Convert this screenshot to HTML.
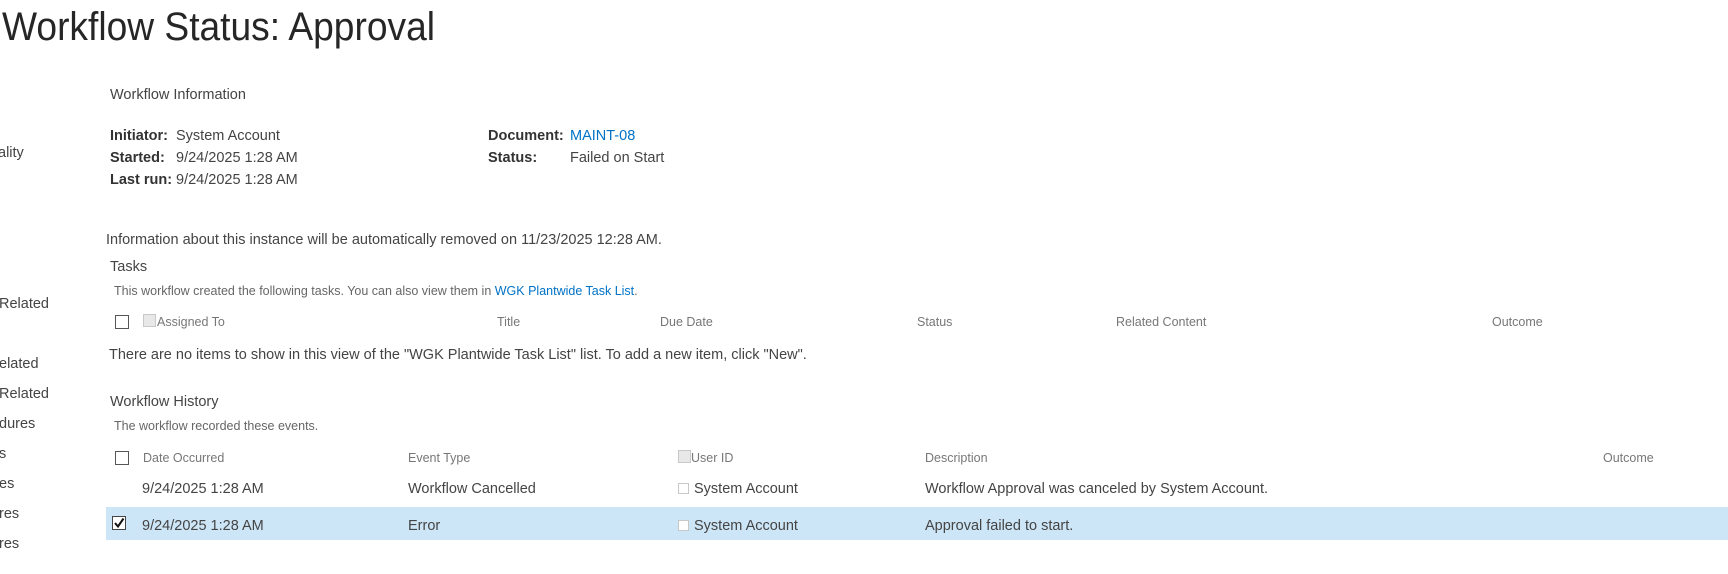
<!DOCTYPE html>
<html><head><meta charset="utf-8"><style>
body{margin:0;width:1728px;height:574px;background:#fff;overflow:hidden;position:relative;font-family:"Liberation Sans",sans-serif;color:#444;}
.a{position:absolute;white-space:nowrap;line-height:1;}
.t{font-size:14.5px;color:#444;margin-top:2px;}
.h{font-size:12.5px;color:#777;}
.s{font-size:12.5px;color:#666;}
.b{font-weight:bold;color:#333;}
.lk{color:#0072c6;}
.cb{position:absolute;width:12px;height:12px;border:1px solid #555;background:#fff;}
.ic{position:absolute;width:11px;height:11px;border:1px solid #c8c8c8;background:#e8e8e8;}
.sb{position:absolute;width:9px;height:9px;border:1px solid #c8c8c8;background:#fff;}
</style></head><body>
<svg style="position:absolute;left:0;top:0" width="480" height="60"><text x="2" y="40" font-family="Liberation Sans, sans-serif" font-size="40" fill="#262626" textLength="433" lengthAdjust="spacingAndGlyphs">Workflow Status: Approval</text></svg>

<div class="a t" style="left:-2px;top:144px">ality</div>
<div class="a t" style="left:-1px;top:295px">Related</div>
<div class="a t" style="left:-1px;top:355px">elated</div>
<div class="a t" style="left:-1px;top:385px">Related</div>
<div class="a t" style="left:-1px;top:415px">dures</div>
<div class="a t" style="left:-1px;top:445px">s</div>
<div class="a t" style="left:-1px;top:475px">es</div>
<div class="a t" style="left:-1px;top:505px">res</div>
<div class="a t" style="left:-1px;top:535px">res</div>

<div class="a t" style="left:110px;top:86px">Workflow Information</div>
<div class="a t b" style="left:110px;top:127px">Initiator:</div><div class="a t" style="left:176px;top:127px">System Account</div>
<div class="a t b" style="left:110px;top:149px">Started:</div><div class="a t" style="left:176px;top:149px">9/24/2025 1:28 AM</div>
<div class="a t b" style="left:110px;top:171px">Last run:</div><div class="a t" style="left:176px;top:171px">9/24/2025 1:28 AM</div>
<div class="a t b" style="left:488px;top:127px">Document:</div><div class="a t lk" style="left:570px;top:127px">MAINT-08</div>
<div class="a t b" style="left:488px;top:149px">Status:</div><div class="a t" style="left:570px;top:149px">Failed on Start</div>

<div class="a t" style="left:106px;top:231px">Information about this instance will be automatically removed on 11/23/2025 12:28 AM.</div>
<div class="a t" style="left:110px;top:258px">Tasks</div>
<div class="a s" style="left:114px;top:285px">This workflow created the following tasks. You can also view them in <span class="lk">WGK Plantwide Task List</span>.</div>
<div class="cb" style="left:115px;top:315px"></div>
<div class="ic" style="left:143px;top:314px"></div>
<div class="a h" style="left:157px;top:316px">Assigned To</div>
<div class="a h" style="left:497px;top:316px">Title</div>
<div class="a h" style="left:660px;top:316px">Due Date</div>
<div class="a h" style="left:917px;top:316px">Status</div>
<div class="a h" style="left:1116px;top:316px">Related Content</div>
<div class="a h" style="left:1492px;top:316px">Outcome</div>
<div class="a t" style="left:109px;top:346px">There are no items to show in this view of the "WGK Plantwide Task List" list. To add a new item, click "New".</div>

<div class="a t" style="left:110px;top:393px">Workflow History</div>
<div class="a s" style="left:114px;top:420px">The workflow recorded these events.</div>
<div class="cb" style="left:115px;top:451px"></div>
<div class="a h" style="left:143px;top:452px">Date Occurred</div>
<div class="a h" style="left:408px;top:452px">Event Type</div>
<div class="ic" style="left:678px;top:450px"></div>
<div class="a h" style="left:691px;top:452px">User ID</div>
<div class="a h" style="left:925px;top:452px">Description</div>
<div class="a h" style="left:1603px;top:452px">Outcome</div>

<div class="a t" style="left:142px;top:480px">9/24/2025 1:28 AM</div>
<div class="a t" style="left:408px;top:480px">Workflow Cancelled</div>
<div class="sb" style="left:678px;top:483px"></div>
<div class="a t" style="left:694px;top:480px">System Account</div>
<div class="a t" style="left:925px;top:480px">Workflow Approval was canceled by System Account.</div>

<div style="position:absolute;left:106px;top:507px;width:1622px;height:33px;background:#cde6f7"></div>
<div class="cb" style="left:112px;top:516px;border-color:#444;"><svg width="12" height="12" style="position:absolute;left:0;top:0"><path d="M2 6 L5 9.5 L10.5 1.5" stroke="#111" stroke-width="2" fill="none"/></svg></div>
<div class="a t" style="left:142px;top:517px">9/24/2025 1:28 AM</div>
<div class="a t" style="left:408px;top:517px">Error</div>
<div class="sb" style="left:678px;top:520px"></div>
<div class="a t" style="left:694px;top:517px">System Account</div>
<div class="a t" style="left:925px;top:517px">Approval failed to start.</div>
</body></html>
